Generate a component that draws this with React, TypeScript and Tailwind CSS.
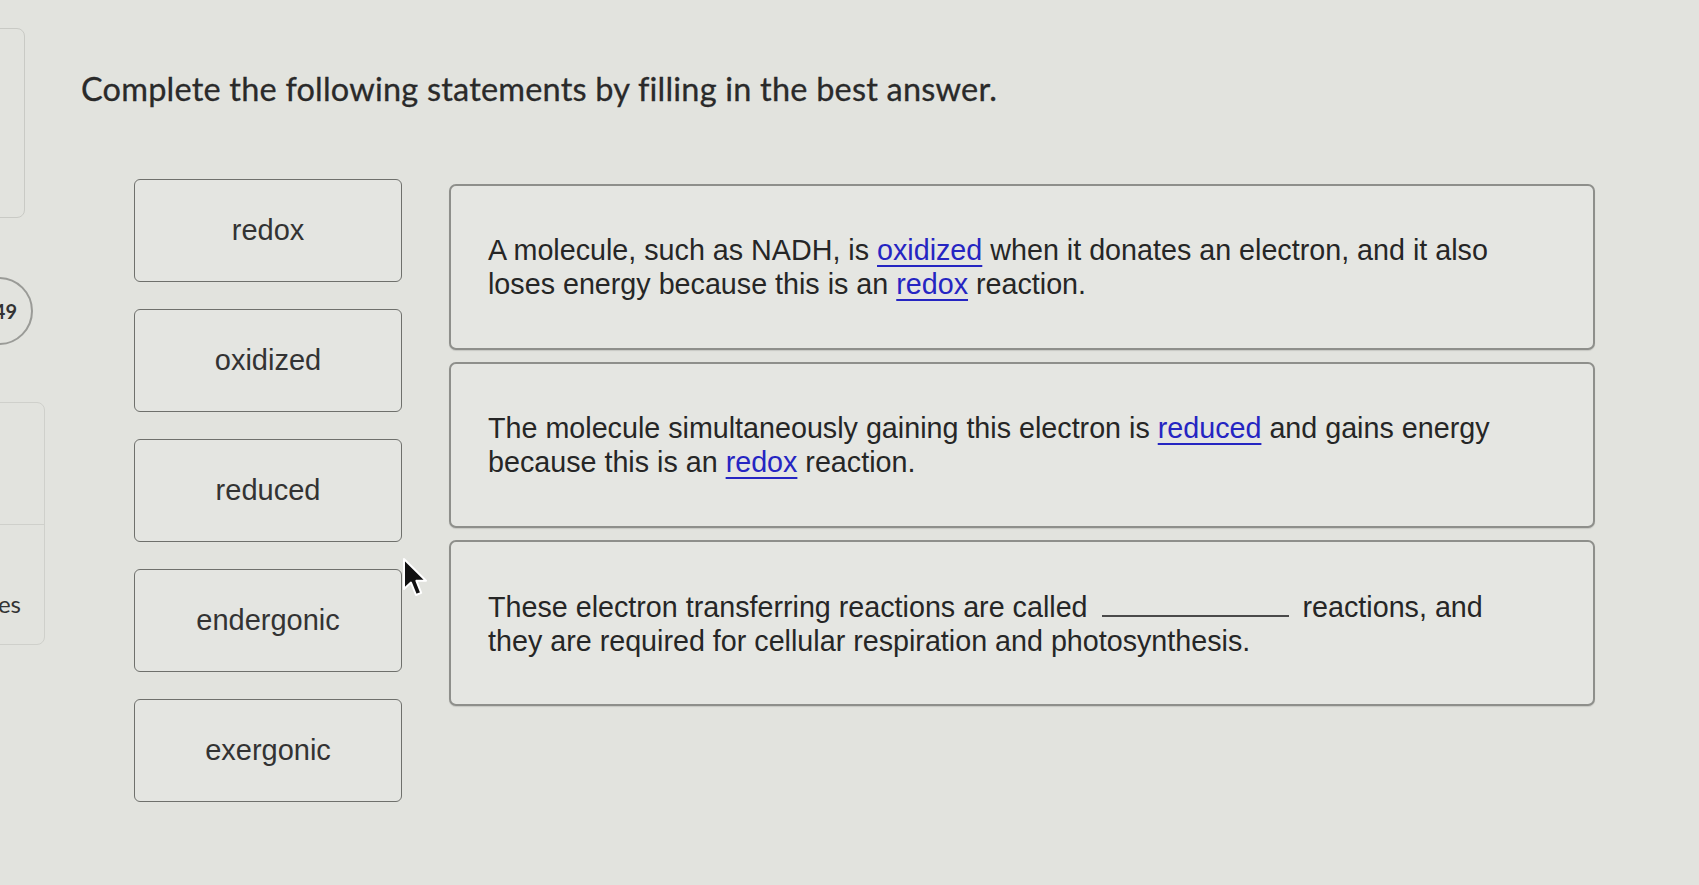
import type { ReactNode } from "react";

const answers = ["redox", "oxidized", "reduced", "endergonic", "exergonic"];

function Blank({ children }: { children: ReactNode }) {
  return (
    <span className="text-[#2525c2] underline decoration-2 underline-offset-[5px]">
      {children}
    </span>
  );
}

function Statement({ children }: { children: ReactNode }) {
  return (
    <div className="flex h-[166px] items-center rounded-[7px] border-2 border-[#8e8f8b] bg-[#e5e6e2] pl-[37px] pr-4 shadow-[0_1px_1px_rgba(0,0,0,0.12)]">
      <p className="text-[28.7px] leading-[34px] text-[#262626]">{children}</p>
    </div>
  );
}

function Cursor() {
  return (
    <svg
      className="absolute left-[402px] top-[557px]"
      width="28"
      height="42"
      viewBox="0 0 14 21"
    >
      <path
        d="M1 1 L1 16 L4.5 12.8 L7 19 L9.6 17.9 L7.2 11.9 L12 11.9 Z"
        fill="#111"
        stroke="#fff"
        strokeWidth="1"
        strokeLinejoin="round"
      />
    </svg>
  );
}

export default function App() {
  return (
    <div
      className="relative flex h-[885px] w-[1699px] overflow-hidden bg-[#e2e3de]"
      style={{ fontFamily: '"Liberation Sans", Arial, sans-serif' }}
    >
      {/* clipped sidebar on the left */}
      <div className="flex w-[50px] shrink-0 flex-col font-['Lato',sans-serif]">
        <div className="-ml-[200px] mt-[28px] h-[190px] w-[225px] rounded-[8px] border border-[#c9cac5]" />
        <div className="-ml-[37px] mt-[59px] flex h-[68px] w-[70px] items-center justify-end rounded-full border-2 border-[#9a9b97] pr-[14px] text-[20px] font-bold text-[#333]">
          49
        </div>
        <div className="-ml-[200px] mt-[57px] flex h-[243px] w-[245px] flex-col rounded-[8px] border border-[#cfd0cb]">
          <div className="h-[122px] border-b border-[#cfd0cb]" />
          <div className="flex flex-1 items-end justify-end pb-[22px] pr-[23px] text-[24px] text-[#333]">
            es
          </div>
        </div>
      </div>

      <div className="flex flex-col pl-[31px] pt-[70px]">
        <h1 className="font-['Lato',sans-serif] text-[32.5px] leading-[38px] tracking-[0.2px] text-[#2a2a2a] [-webkit-text-stroke:0.3px_#2a2a2a]">
          Complete the following statements by filling in the best answer.
        </h1>

        <div className="mt-[71px] flex">
          <div className="ml-[53px] flex w-[268px] flex-col gap-[27px]">
            {answers.map((a) => (
              <div
                key={a}
                className="flex h-[103px] items-center justify-center rounded-[6px] border-[1.5px] border-[#6f706c] bg-[#e4e5e1] text-[29px] text-[#333]"
              >
                {a}
              </div>
            ))}
          </div>

          <div className="ml-[47px] mt-[5px] flex w-[1146px] flex-col gap-[12px]">
            <Statement>
              A molecule, such as NADH, is <Blank>oxidized</Blank> when it donates an
              electron, and it also
              <br />
              loses energy because this is an <Blank>redox</Blank> reaction.
            </Statement>
            <Statement>
              The molecule simultaneously gaining this electron is{" "}
              <Blank>reduced</Blank> and gains energy
              <br />
              because this is an <Blank>redox</Blank> reaction.
            </Statement>
            <Statement>
              These electron transferring reactions are called
              <span className="mx-[14px] inline-block h-[1em] w-[187px] border-b-2 border-[#4a4a4a] align-baseline" />
              reactions, and
              <br />
              they are required for cellular respiration and photosynthesis.
            </Statement>
          </div>
        </div>
      </div>

      <Cursor />
    </div>
  );
}
